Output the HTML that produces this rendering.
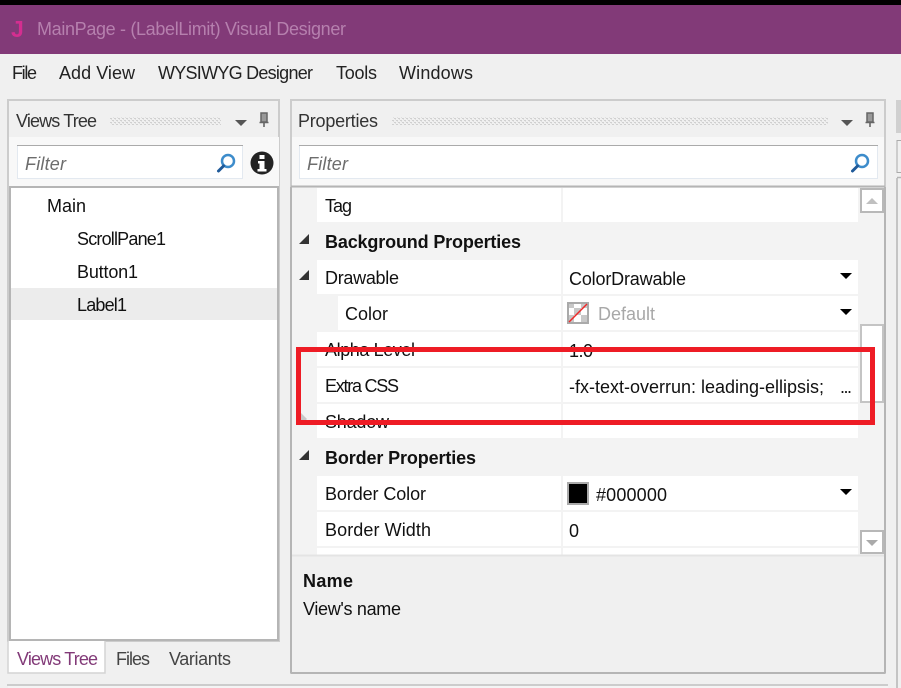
<!DOCTYPE html>
<html lang="en"><head><meta charset="utf-8"><title>MainPage - (LabelLimit) Visual Designer</title>
<style>
html,body{margin:0;padding:0;background:#f0f0f0;width:901px;height:688px;overflow:hidden}
svg{display:block;position:absolute;left:0;top:0}
text{font-family:"Liberation Sans",sans-serif;font-size:18px;fill:#111}
.b{font-weight:bold}
.m{fill:#222}
</style></head><body>
<svg width="901" height="688" viewBox="0 0 901 688" xmlns="http://www.w3.org/2000/svg">
<defs>
<pattern id="dots" width="4" height="4" patternUnits="userSpaceOnUse"><rect width="4" height="4" fill="#f0f0f0"/><rect x="0" y="0" width="2" height="1" fill="#d0d0d0"/><rect x="2" y="2" width="2" height="1" fill="#d0d0d0"/><rect x="1" y="1" width="1" height="1" fill="#e0e0e0"/><rect x="3" y="3" width="1" height="1" fill="#e0e0e0"/></pattern>
<pattern id="chk" width="14" height="14" patternUnits="userSpaceOnUse"><rect width="14" height="14" fill="#fff"/><rect width="7" height="7" fill="#c8c8c8"/><rect x="7" y="7" width="7" height="7" fill="#c8c8c8"/></pattern>
</defs>
<rect width="901" height="688" fill="#f0f0f0"/>
<rect width="901" height="5" fill="#000"/>
<rect y="5" width="901" height="49" fill="#823a78"/>
<text x="11" y="37" class="b" style="font-size:23px;fill:#d42e90" textLength="13">J</text>
<text x="37" y="35" style="fill:#b680ae" textLength="309">MainPage - (LabelLimit) Visual Designer</text>

<text x="12" y="79" class="m" textLength="25">File</text>
<text x="59" y="79" class="m" textLength="76">Add View</text>
<text x="158" y="79" class="m" textLength="155">WYSIWYG Designer</text>
<text x="336" y="79" class="m" textLength="41">Tools</text>
<text x="399" y="79" class="m" textLength="74">Windows</text>

<!-- Views Tree panel -->
<rect x="8" y="100" width="271" height="541" fill="#f0f0f0" stroke="#cccccc" stroke-width="2"/>
<rect x="9" y="137" width="270" height="50" fill="#f8f8f8"/>
<text x="16" y="127" class="m" style="fill:#333" textLength="81">Views Tree</text>
<rect x="110" y="117" width="111" height="8" fill="url(#dots)"/>
<path d="M235 120h12l-6 6z" fill="#555"/>
<rect x="261" y="113" width="6" height="9" fill="#999" stroke="#666" stroke-width="1.500"/>
<path d="M259.500 122.500h9M264 122v5" stroke="#666" stroke-width="1.600" fill="none"/>
<rect x="17.500" y="145.500" width="225" height="33" fill="#fff" stroke="#e3e9f0"/>
<path d="M17 145.500h226" stroke="#aaa"/>
<text x="25" y="170" style="font-style:italic;fill:#6d6d6d" textLength="41">Filter</text>
<circle cx="228" cy="161" r="6" fill="none" stroke="#3d8ccb" stroke-width="2.500"/>
<path d="M223.500 166l-5 5" stroke="#1f5a99" stroke-width="3" stroke-linecap="round"/>
<circle cx="262" cy="163" r="11.500" fill="#222"/>
<rect x="259.500" y="155" width="5" height="4" fill="#fff"/>
<path d="M258 161h6.500v8h2v2.500h-9V169h2v-5.500h-1.500z" fill="#fff"/>

<rect x="10" y="187" width="268" height="453" fill="#fff" stroke="#b5b5b5" stroke-width="2"/>
<rect x="11" y="288" width="266" height="32" fill="#ececec"/>
<text x="47" y="212" textLength="39">Main</text>
<text x="77" y="245" textLength="89">ScrollPane1</text>
<text x="77" y="278" textLength="61">Button1</text>
<text x="77" y="311" textLength="50">Label1</text>

<rect x="8" y="641" width="97" height="32" fill="#fff"/>
<path d="M8 641v32h97v-32" fill="none" stroke="#d4d4d4" stroke-width="1.500"/>
<text x="17" y="665" style="fill:#823a78" textLength="81">Views Tree</text>
<text x="116" y="665" style="fill:#444" textLength="34">Files</text>
<text x="169" y="665" style="fill:#444" textLength="62">Variants</text>

<!-- Properties panel -->
<rect x="291" y="100" width="594" height="573" fill="#f0f0f0" stroke="#cccccc" stroke-width="2"/>
<rect x="292" y="137" width="592" height="50" fill="#f8f8f8"/>
<text x="298" y="127" class="m" style="fill:#333" textLength="80">Properties</text>
<rect x="392" y="117" width="436" height="8" fill="url(#dots)"/>
<path d="M841 120h12l-6 6z" fill="#555"/>
<rect x="867" y="113" width="6" height="9" fill="#999" stroke="#666" stroke-width="1.500"/>
<path d="M865.500 122.500h9M870 122v5" stroke="#666" stroke-width="1.600" fill="none"/>
<rect x="299.500" y="145.500" width="578" height="33" fill="#fff" stroke="#e3e9f0"/>
<path d="M299 145.500h579" stroke="#aaa"/>
<text x="307" y="170" style="font-style:italic;fill:#6d6d6d" textLength="41">Filter</text>
<circle cx="862" cy="161" r="6" fill="none" stroke="#3d8ccb" stroke-width="2.500"/>
<path d="M857.500 166l-5 5" stroke="#1f5a99" stroke-width="3" stroke-linecap="round"/>

<!-- grid -->
<rect x="292" y="188" width="592" height="368" fill="#f3f3f3"/>
<path d="M291 186.500h594" stroke="#b5b5b5" stroke-width="2"/>
<path d="M291 187v486M885 187v486" stroke="#b5b5b5" stroke-width="2"/>
<path d="M291 673h594" stroke="#b5b5b5" stroke-width="2"/>
<g fill="#fff">
<rect x="317" y="188" width="244" height="34"/><rect x="563" y="188" width="295" height="34"/>
<rect x="317" y="260" width="244" height="34"/><rect x="563" y="260" width="295" height="34"/>
<rect x="338" y="296" width="223" height="34"/><rect x="563" y="296" width="295" height="34"/>
<rect x="317" y="332" width="244" height="34"/><rect x="563" y="332" width="295" height="34"/>
<rect x="317" y="368" width="244" height="34"/><rect x="563" y="368" width="295" height="34"/>
<rect x="317" y="404" width="244" height="34"/><rect x="563" y="404" width="295" height="34"/>
<rect x="317" y="476" width="244" height="34"/><rect x="563" y="476" width="295" height="34"/>
<rect x="317" y="512" width="244" height="34"/><rect x="563" y="512" width="295" height="34"/>
<rect x="317" y="548" width="244" height="7"/><rect x="563" y="548" width="295" height="7"/>
</g>
<text x="325" y="212" textLength="27">Tag</text>
<text x="325" y="248" class="b" textLength="196">Background Properties</text>
<text x="325" y="284" textLength="74">Drawable</text>
<text x="345" y="320" textLength="43">Color</text>
<text x="325" y="356" textLength="90">Alpha Level</text>
<text x="325" y="392" textLength="74">Extra CSS</text>
<text x="325" y="428" textLength="64">Shadow</text>
<text x="325" y="464" class="b" textLength="151">Border Properties</text>
<text x="325" y="500" textLength="101">Border Color</text>
<text x="325" y="536" textLength="106">Border Width</text>
<text x="569" y="285" textLength="117">ColorDrawable</text>
<text x="598" y="320" style="fill:#a8a8a8" textLength="57">Default</text>
<text x="569" y="357" textLength="24">1.0</text>
<text x="569" y="393" textLength="255">-fx-text-overrun: leading-ellipsis;</text>
<text x="840" y="393" textLength="12">...</text>
<text x="596" y="501" textLength="71">#000000</text>
<text x="569" y="537">0</text>

<path d="M299 244l10-10v10zM299 280l10-10v10zM299 460l10-10v10z" fill="#333"/>
<path d="M301 413v12l6-6z" fill="#c8c8c8"/>
<path d="M840 273h12l-6 6zM840 309h12l-6 6zM840 489h12l-6 6z" fill="#000"/>

<rect x="568" y="303" width="20" height="20" fill="url(#chk)" stroke="#aaa" stroke-width="2"/>
<path d="M569 322l18-18" stroke="#ee2a2a" stroke-width="1.500"/>
<rect x="568" y="483" width="20" height="21" fill="#000" stroke="#aaa" stroke-width="2"/>

<!-- scrollbar -->
<rect x="861" y="189" width="22" height="23" fill="#fff" stroke="#b8b8b8" stroke-width="2"/>
<path d="M866 204l6-6 6 6z" fill="#c0c0c0"/>
<rect x="861" y="325" width="22" height="77" fill="#fff" stroke="#c4c4c4" stroke-width="2"/>
<rect x="861" y="531" width="22" height="22" fill="#fff" stroke="#b8b8b8" stroke-width="2"/>
<path d="M866 540h12l-6 6z" fill="#aaa"/>

<!-- description -->
<rect x="292" y="555" width="592" height="117" fill="#f0f0f0"/>
<path d="M292 555.500h592" stroke="#e4e4e4" stroke-width="2"/>
<text x="303" y="587" class="b" textLength="50">Name</text>
<text x="303" y="615" textLength="98">View's name</text>

<!-- red highlight -->
<rect x="298.500" y="349.500" width="574" height="73" fill="none" stroke="#ee1c25" stroke-width="5"/>

<!-- right edge -->
<rect x="896" y="100" width="5" height="33" fill="#d0d0d0"/>
<path d="M897 140.500h4M897 172.500h4M897 140v33" fill="#fff" stroke="#aaa"/>
<path d="M897 177.500h4M897 178v510" fill="none" stroke="#b5b5b5" stroke-width="1.500"/>
<!-- bottom panel -->
<rect x="8" y="685" width="880" height="3" fill="#f4f4f4"/>
<path d="M7 685h881" stroke="#cccccc" stroke-width="2"/>
</svg>
</body></html>
